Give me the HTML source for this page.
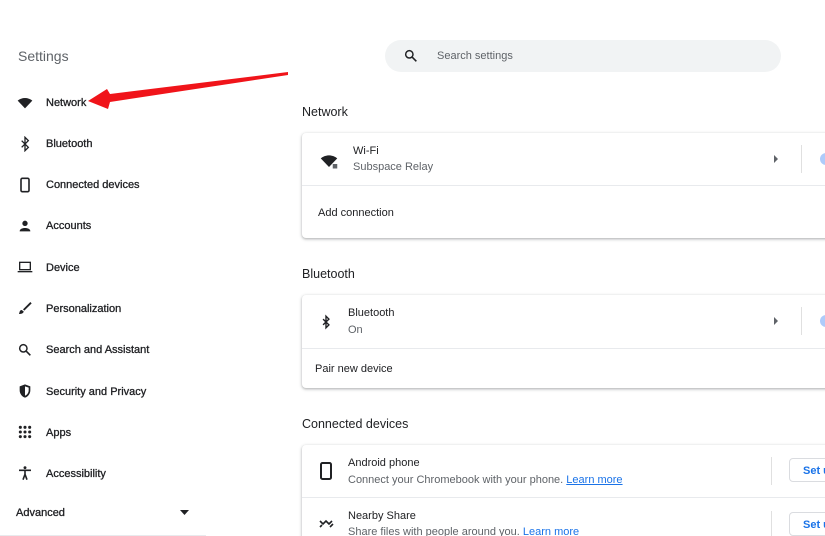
<!DOCTYPE html><html style="height:536px;overflow:hidden"><head><style>
body{margin:0;width:825px;height:536px;overflow:hidden;background:#fff;font-family:"Liberation Sans",sans-serif;color:#202124;position:relative}
.a{position:absolute}
.nav{font-size:11px;color:#202124;-webkit-text-stroke:0.3px #202124;margin-top:1px}
.ic{position:absolute;left:17px;width:16px;height:16px}
.card{position:absolute;left:302px;width:540px;background:#fff;border-radius:4px;box-shadow:0 1px 2px rgba(60,64,67,.3),0 1px 3px 1px rgba(60,64,67,.12)}
.h{font-size:12.5px;color:#202124;position:absolute;left:302px;margin-top:1px}
.t{font-size:11px;position:absolute;margin-top:1px}
.s{font-size:11px;color:#5f6368;position:absolute;margin-top:1px}
.div{position:absolute;left:0;right:0;height:1px;background:#e8eaed}
.vs{position:absolute;width:1px;height:28px;background:#e0e0e0}
.btn{position:absolute;left:789px;width:60px;height:24px;border:1px solid #dadce0;border-radius:4px;color:#1a73e8;font-size:11px;font-weight:bold;line-height:24px;padding-left:13px;box-sizing:border-box}
</style></head><body>
<div class="a" style="left:18px;top:48px;font-size:14px;color:#5f6368">Settings</div>
<div class="a" style="left:385px;top:40px;width:396px;height:32px;border-radius:16px;background:#f1f3f4"></div>
<svg class="a" style="left:403px;top:48px" width="16" height="16" viewBox="0 0 24 24"><circle cx="9.5" cy="9.5" r="5.5" fill="none" stroke="#202124" stroke-width="2.2"/><path d="M14 14l6 6" stroke="#202124" stroke-width="2.4"/></svg>
<div class="a" style="left:437px;top:50px;font-size:11px;color:#5f6368">Search settings</div>

<svg class="ic" style="top:95px" viewBox="0 0 24 24"><path d="M12 20L1 8.5C4 6 8 4.5 12 4.5S20 6 23 8.5z" fill="#202124"/></svg>
<div class="a nav" style="left:46px;top:96px">Network</div>
<svg class="ic" style="top:136px" viewBox="0 0 24 24"><path d="M7 7l10 10-5 5V2l5 5L7 17" fill="none" stroke="#202124" stroke-width="2"/></svg>
<div class="a nav" style="left:46px;top:137px">Bluetooth</div>
<svg class="ic" style="top:177px" viewBox="0 0 24 24"><rect x="6" y="2" width="12" height="20" rx="2" fill="none" stroke="#202124" stroke-width="2.4"/></svg>
<div class="a nav" style="left:46px;top:178px">Connected devices</div>
<svg class="ic" style="top:218px" viewBox="0 0 24 24"><circle cx="12" cy="8" r="4" fill="#202124"/><path d="M4 20c0-4 5-5 8-5s8 1 8 5z" fill="#202124"/></svg>
<div class="a nav" style="left:46px;top:219px">Accounts</div>
<svg class="ic" style="top:259px" viewBox="0 0 24 24"><rect x="4" y="5" width="16" height="11" fill="none" stroke="#202124" stroke-width="2"/><path d="M1 19h22" stroke="#202124" stroke-width="2"/></svg>
<div class="a nav" style="left:46px;top:261px">Device</div>
<svg class="ic" style="top:300px" viewBox="0 0 24 24"><path d="M20 3L9 14l2 2L22 5zM7 15c-3 0-3 3-4 6 3 0 7-1 7-4z" fill="#202124"/></svg>
<div class="a nav" style="left:46px;top:302px">Personalization</div>
<svg class="ic" style="top:342px" viewBox="0 0 24 24"><circle cx="9.5" cy="9.5" r="5.5" fill="none" stroke="#202124" stroke-width="2.2"/><path d="M14 14l6 6" stroke="#202124" stroke-width="2.4"/></svg>
<div class="a nav" style="left:46px;top:343px">Search and Assistant</div>
<svg class="ic" style="top:383px" viewBox="0 0 24 24"><path d="M12 2l8 3v6c0 5-3.5 9.5-8 11-4.5-1.5-8-6-8-11V5z" fill="#202124"/><path d="M12 5v14c3-1 5.5-4.5 5.5-8V7z" fill="#fff"/></svg>
<div class="a nav" style="left:46px;top:385px">Security and Privacy</div>
<svg class="ic" style="top:424px" viewBox="0 0 24 24"><g fill="#202124"><circle cx="5" cy="5" r="2.3"/><circle cx="12" cy="5" r="2.3"/><circle cx="19" cy="5" r="2.3"/><circle cx="5" cy="12" r="2.3"/><circle cx="12" cy="12" r="2.3"/><circle cx="19" cy="12" r="2.3"/><circle cx="5" cy="19" r="2.3"/><circle cx="12" cy="19" r="2.3"/><circle cx="19" cy="19" r="2.3"/></g></svg>
<div class="a nav" style="left:46px;top:426px">Apps</div>
<svg class="ic" style="top:465px" viewBox="0 0 24 24"><circle cx="12" cy="4" r="2.2" fill="#202124"/><path d="M3 8h18M12 8v6M12 14l-3 8M12 14l3 8" stroke="#202124" stroke-width="2.4" fill="none"/></svg>
<div class="a nav" style="left:46px;top:467px">Accessibility</div>
<div class="a nav" style="left:16px;top:506px">Advanced</div>
<svg class="a" style="left:180px;top:510px" width="9" height="6"><path d="M0 0h9L4.5 5z" fill="#202124"/></svg>
<div class="a" style="left:0;top:535px;width:206px;height:1px;background:#e8eaed"></div>

<svg class="a" style="left:0;top:0" width="300" height="120"><polygon points="288,72 110,94 107,89 88,101 108,109 110,102 288,75" fill="#f0141a"/></svg>

<div class="h" style="top:104px">Network</div>
<div class="card" style="top:133px;height:105px">
<svg class="a" style="left:18px;top:19px" width="18" height="18" viewBox="0 0 24 24"><path d="M12 20L1 8.5C4 6 8 4.5 12 4.5S20 6 23 8.5z" fill="#202124"/><rect x="17" y="16" width="6" height="6" fill="#5f6368"/></svg>
<div class="t" style="left:51px;top:11px">Wi-Fi</div>
<div class="s" style="left:51px;top:27px">Subspace Relay</div>
<svg class="a" style="left:472px;top:22px" width="5" height="8"><path d="M0 0l4 4-4 4z" fill="#5f6368"/></svg>
<div class="vs" style="left:499px;top:12px"></div>
<div class="a" style="left:518px;top:20px;width:10px;height:12px;border-radius:6px 0 0 6px;background:#aecbfa"></div>
<div class="div" style="top:52px"></div>
<div class="t" style="left:16px;top:73px">Add connection</div>
</div>

<div class="h" style="top:266px">Bluetooth</div>
<div class="card" style="top:295px;height:93px">
<svg class="a" style="left:17px;top:19px" width="14" height="16" viewBox="0 0 24 24"><path d="M7 7l10 10-5 5V2l5 5L7 17" fill="none" stroke="#202124" stroke-width="2.4"/></svg>
<div class="t" style="left:46px;top:11px">Bluetooth</div>
<div class="s" style="left:46px;top:28px">On</div>
<svg class="a" style="left:472px;top:22px" width="5" height="8"><path d="M0 0l4 4-4 4z" fill="#5f6368"/></svg>
<div class="vs" style="left:499px;top:12px"></div>
<div class="a" style="left:518px;top:20px;width:10px;height:12px;border-radius:6px 0 0 6px;background:#aecbfa"></div>
<div class="div" style="top:53px"></div>
<div class="t" style="left:13px;top:67px">Pair new device</div>
</div>

<div class="h" style="top:416px">Connected devices</div>
<div class="card" style="top:445px;height:110px">
<svg class="a" style="left:17px;top:17px" width="14" height="18" viewBox="0 0 14 18"><rect x="2" y="1" width="10" height="16" rx="1.5" fill="none" stroke="#202124" stroke-width="2"/></svg>
<div class="t" style="left:46px;top:11px">Android phone</div>
<div class="s" style="left:46px;top:28px">Connect your Chromebook with your phone. <span style="color:#1a73e8;text-decoration:underline">Learn more</span></div>
<div class="vs" style="left:469px;top:12px"></div>
<div class="div" style="top:52px"></div>
<svg class="a" style="left:17px;top:74px" width="15" height="10" viewBox="0 0 15 10"><path d="M1 2l3 3 3-3 3 3 3-3M1 8l2-2M11 8l3-3" stroke="#202124" stroke-width="1.6" fill="none"/></svg>
<div class="t" style="left:46px;top:64px">Nearby Share</div>
<div class="s" style="left:46px;top:80px">Share files with people around you. <span style="color:#1a73e8">Learn more</span></div>
<div class="vs" style="left:469px;top:66px"></div>
</div>
<div class="btn" style="top:458px">Set up</div>
<div class="btn" style="top:512px">Set up</div>
</body></html>
